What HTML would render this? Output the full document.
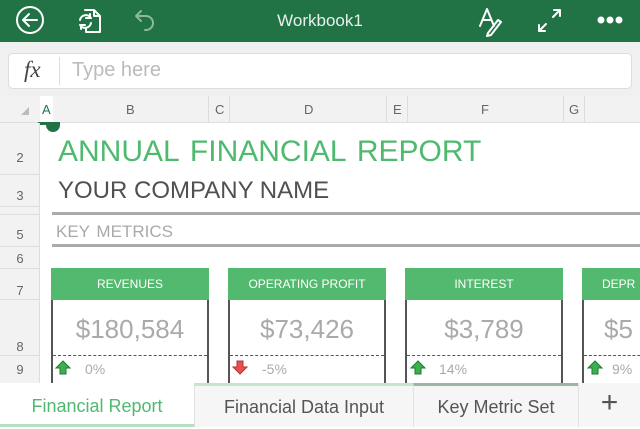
<!DOCTYPE html><html><head><style>
*{margin:0;padding:0;box-sizing:border-box}
body{width:640px;height:427px;overflow:hidden;position:relative;background:#fff;font-family:"Liberation Sans",sans-serif}
.a{position:absolute}
.hdr{left:0;top:0;width:640px;height:42px;background:#217346}
.fb{left:0;top:42px;width:640px;height:54px;background:#f0f0f0}
.inp{left:8px;top:53px;width:624px;height:36px;background:#fff;border:1px solid #ddd;border-radius:5px}
.colh{left:0;top:96px;width:640px;height:27px;background:#f2f2f2;border-bottom:1px solid #ddd}
.rowh{left:0;top:123px;width:40px;height:260px;background:#f2f2f2;border-right:1px solid #ddd}
.cl{font-size:13px;color:#666;top:102px}
.rl{font-size:13px;color:#666;width:40px;text-align:center}
.hl{left:0;width:40px;height:1px;background:#ddd}
.card{top:268px;width:158px;height:130px;border-left:2px solid #555;border-right:2px solid #555}
.card .h{height:32px;background:#53b96e;color:#fff;font-size:12px;text-align:center;line-height:33px;margin:0 -2px}
.card .v{font-size:26px;color:#aaa;text-align:center;margin-top:14px;height:41px}
.card .d{border-top:1.5px dashed #555;height:1px}
.card .p{font-size:14px;color:#aaa;margin:5px 0 0 32px}
.tab{top:383px;height:44px;font-size:18px;color:#555;line-height:46px;text-align:center;background:#f6f6f6;border-left:1px solid #e2e2e2}
</style></head><body>
<div class="a hdr"></div>
<svg class="a" style="left:0;top:0" width="640" height="42" fill="none" stroke="#fff" stroke-width="2" stroke-linecap="round" stroke-linejoin="round">
<circle cx="30" cy="20" r="13"/><path d="M37 20H23M29 14l-6 6 6 6"/>
<path d="M85 10h9l6 6v16H86v-4M94 10v6h6M80 20a6 6 0 0 1 11-2M91 23a6 6 0 0 1-11 2M90 14v4h-4M81 29v-4h4"/>
<path stroke="#8fb89d" d="M141 11l-5 5 5 5M136 16h10a7 7 0 0 1 0 14h-1"/>
<path d="M480 26l7-17 7 17M483 20h8M488 33l10-13 3 2-10 13-4 1z"/>
<path d="M546 24l-7 7M539 25v6h6M553 17l7-7M554 10h6v6"/>
</svg>
<svg class="a" style="left:596;top:14" width="40" height="12"><circle cx="5" cy="6" r="3.5" fill="#fff"/><circle cx="14" cy="6" r="3.5" fill="#fff"/><circle cx="23" cy="6" r="3.5" fill="#fff"/></svg>
<div class="a" style="left:0;top:11px;width:640px;text-align:center;color:#e8f0ea;font-size:17px">Workbook1</div>
<div class="a fb"></div>
<div class="a inp"></div>
<div class="a" style="left:24px;top:57px;font-family:'Liberation Serif',serif;font-style:italic;font-size:23px;color:#444">fx</div>
<div class="a" style="left:59px;top:57px;width:1px;height:28px;background:#ddd"></div>
<div class="a" style="left:72px;top:59px;font-size:20px;color:#bbb">Type here</div>
<div class="a colh"></div>
<svg class="a" style="left:20px;top:106px" width="10" height="10"><path d="M1 9L9 1V9Z" fill="#bbb"/></svg>
<div class="a" style="left:40px;top:96px;width:13px;height:27px;background:#fff"></div>
<div class="a cl" style="left:42px;color:#217346">A</div>
<div class="a" style="left:38px;top:122px;width:16px;height:3px;background:#217346"></div>
<div class="a" style="left:46px;top:122px;width:14px;height:10px;border-radius:0 0 7px 7px;background:#217346"></div>
<div class="a cl" style="left:126px">B</div>
<div class="a cl" style="left:215px">C</div>
<div class="a cl" style="left:304px">D</div>
<div class="a cl" style="left:393px">E</div>
<div class="a cl" style="left:481px">F</div>
<div class="a cl" style="left:569px">G</div>
<div class="a" style="left:208px;top:96px;width:1px;height:27px;background:#ddd"></div>
<div class="a" style="left:229px;top:96px;width:1px;height:27px;background:#ddd"></div>
<div class="a" style="left:386px;top:96px;width:1px;height:27px;background:#ddd"></div>
<div class="a" style="left:407px;top:96px;width:1px;height:27px;background:#ddd"></div>
<div class="a" style="left:563px;top:96px;width:1px;height:27px;background:#ddd"></div>
<div class="a" style="left:584px;top:96px;width:1px;height:27px;background:#ddd"></div>
<div class="a rowh"></div>
<div class="a hl" style="top:174px"></div><div class="a hl" style="top:206px"></div><div class="a hl" style="top:214px"></div>
<div class="a hl" style="top:246px"></div><div class="a hl" style="top:268px"></div><div class="a hl" style="top:299px"></div><div class="a hl" style="top:355px"></div>
<div class="a rl" style="top:150px">2</div>
<div class="a rl" style="top:188px">3</div>
<div class="a rl" style="top:227px">5</div>
<div class="a rl" style="top:251px">6</div>
<div class="a rl" style="top:283px">7</div>
<div class="a rl" style="top:339px">8</div>
<div class="a rl" style="top:362px">9</div>
<div class="a" style="left:58px;top:135px;font-size:30px;color:#4fba6f;word-spacing:3px">ANNUAL FINANCIAL REPORT</div>
<div class="a" style="left:58px;top:177px;font-size:24px;color:#505050">YOUR COMPANY NAME</div>
<div class="a" style="left:52px;top:212px;width:588px;height:3px;background:#aaa"></div>
<div class="a" style="left:56px;top:222px;font-size:17px;color:#aaa;word-spacing:2px">KEY METRICS</div>
<div class="a" style="left:52px;top:244px;width:588px;height:3px;background:#aaa"></div>
<div class="a card" style="left:51px"><div class="h">REVENUES</div><div class="v">$180,584</div><div class="d"></div><div class="p">0%</div></div>
<div class="a card" style="left:228px"><div class="h">OPERATING PROFIT</div><div class="v">$73,426</div><div class="d"></div><div class="p">-5%</div></div>
<div class="a card" style="left:405px"><div class="h">INTEREST</div><div class="v">$3,789</div><div class="d"></div><div class="p">14%</div></div>
<div class="a card" style="left:582px;width:70px"><div class="h" style="text-align:left;padding-left:20px">DEPR</div><div class="v" style="text-align:left;padding-left:20px">$5</div><div class="d"></div><div class="p" style="margin-left:28px">9%</div></div>
<svg class="a" style="left:0;top:358px" width="640" height="20">
<path d="M63 3l-7 7h4v6h6v-6h4z" fill="#3cb04f" stroke="#1f7a30"/>
<path d="M240 16l-7-7h4V3h6v6h4z" fill="#e55050" stroke="#b33"/>
<path d="M418 3l-7 7h4v6h6v-6h4z" fill="#3cb04f" stroke="#1f7a30"/>
<path d="M595 3l-7 7h4v6h6v-6h4z" fill="#3cb04f" stroke="#1f7a30"/>
</svg>
<div class="a" style="left:0;top:383px;width:640px;height:44px;background:#f6f6f6"></div>
<div class="a tab" style="left:0;width:194px;background:#fff;color:#4fba6f;border:none;border-bottom:3px solid #b5dfc0">Financial Report</div>
<div class="a tab" style="left:194px;width:219px;border-top:3px solid #c5e5cd;line-height:42px">Financial Data Input</div>
<div class="a tab" style="left:413px;width:165px;border-top:3px solid #9ab5a3;line-height:42px">Key Metric Set</div>
<div class="a tab" style="left:578px;width:62px;font-size:30px;font-weight:300;line-height:40px">+</div>
</body></html>
